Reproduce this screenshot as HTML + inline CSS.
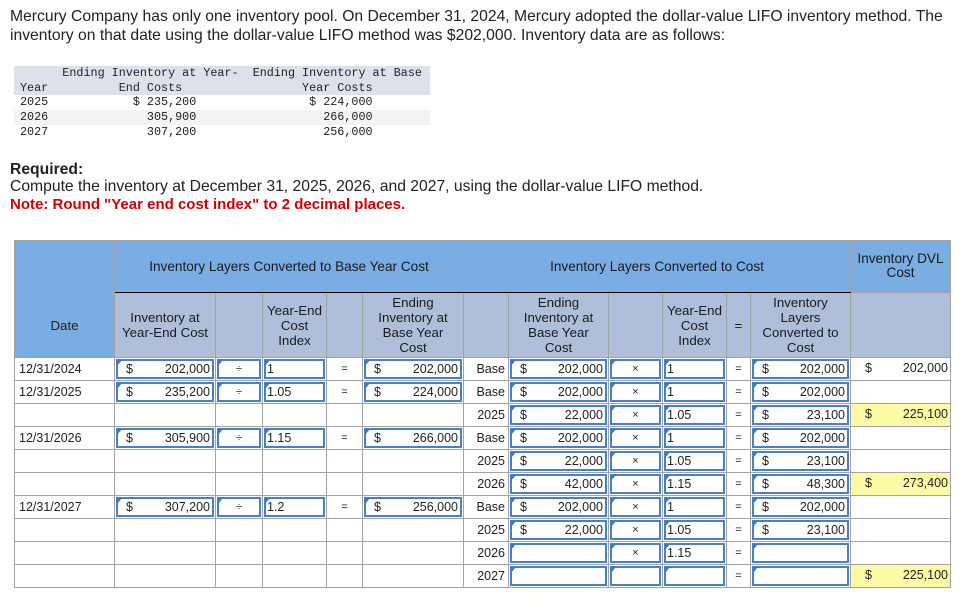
<!DOCTYPE html>
<html><head><meta charset="utf-8"><style>
body{margin:0;width:964px;height:600px;background:#fff;font-family:"Liberation Sans",Arial,sans-serif;color:#222;position:relative;overflow:hidden}
.p{position:absolute;left:10px;font-size:15.7px;line-height:19px}
.mono{position:absolute;left:20px;top:66px;width:410px;font-family:"Liberation Mono",monospace;font-size:11.75px;line-height:14.7px;color:#222}
.mono div{white-space:pre;height:14.7px}
table{position:absolute;left:14px;top:240px;border-collapse:collapse;table-layout:fixed;font-size:12.5px}
td{border:1px solid #a3a3a3;padding:0;height:22px;position:relative;white-space:nowrap}
.h1{background:#79ade3;height:51px;text-align:center;font-size:13.6px;border-bottom:1px solid #000;color:#1a1a1a}
.h2{background:#b0bfd9;height:64px;text-align:center;line-height:15px;font-size:13.3px;color:#1a1a1a}
.dh{background:#79ade3;text-align:center;font-size:13.3px;vertical-align:top}
.in{position:absolute;left:1px;right:1px;top:1px;bottom:1px;border:2px solid #4a7fc1;background:#fff;box-sizing:border-box;line-height:17px}
.in:before{content:"";position:absolute;left:-1px;top:-1px;border-top:6px solid #3a78c8;border-right:5px solid transparent}
.d{position:absolute;left:8px}
.v{position:absolute;right:2px}
.t{position:absolute;left:1px}
.y{background:#fdfaa6}
.ctr{text-align:center;font-size:11px}
.lab{text-align:right;padding-right:3px}
.pl{padding-left:4px}
</style></head><body>
<div class="p" style="top:7px">Mercury Company has only one inventory pool. On December 31, 2024, Mercury adopted the dollar-value LIFO inventory method. The<br>inventory on that date using the dollar-value LIFO method was $202,000. Inventory data are as follows:</div>
<div style="position:absolute;left:14px;top:66px;width:416px;height:29px;background:#dde1ea"></div>
<div style="position:absolute;left:14px;top:110px;width:416px;height:14.7px;background:#f3f3f3"></div>
<div class="mono">
<div>      Ending Inventory at Year-  Ending Inventory at Base</div>
<div>Year          End Costs                 Year Costs</div>
<div>2025            $ 235,200                $ 224,000</div>
<div>2026              305,900                  266,000</div>
<div>2027              307,200                  256,000</div>
</div>
<div class="p" style="top:160px;font-weight:bold">Required:</div>
<div class="p" style="top:177px">Compute the inventory at December 31, 2025, 2026, and 2027, using the dollar-value LIFO method.</div>
<div class="p" style="top:195px;color:#c00;font-weight:bold;font-size:15px">Note: Round "Year end cost index" to 2 decimal places.</div>

<table>
<colgroup><col style="width:100px"><col style="width:101px"><col style="width:47px"><col style="width:64px"><col style="width:36px"><col style="width:101px"><col style="width:45px"><col style="width:100px"><col style="width:54px"><col style="width:64px"><col style="width:24px"><col style="width:100px"><col style="width:100px"></colgroup>
<tr><td class="dh" rowspan="2"><div style="position:absolute;left:0;right:0;top:77px">Date</div></td><td class="h1" colspan="5">Inventory Layers Converted to Base Year Cost</td><td class="h1" colspan="6">Inventory Layers Converted to Cost</td><td class="h1" style="vertical-align:top;border-bottom:1px solid #a3a3a3"><div style="margin-top:11px;line-height:14px">Inventory DVL<br>Cost</div></td></tr>
<tr><td class="h2">Inventory at<br>Year-End Cost</td><td class="h2"></td><td class="h2">Year-End<br>Cost<br>Index</td><td class="h2"></td><td class="h2">Ending<br>Inventory at<br>Base Year<br>Cost</td><td class="h2"></td><td class="h2">Ending<br>Inventory at<br>Base Year<br>Cost</td><td class="h2"></td><td class="h2">Year-End<br>Cost<br>Index</td><td class="h2">=</td><td class="h2">Inventory<br>Layers<br>Converted to<br>Cost</td><td class="h2"></td></tr>

<tr><td class="pl">12/31/2024</td><td><div class="in"><span class="d">$</span><span class="v">202,000</span></div></td><td class="ctr"><div class="in">÷</div></td><td><div class="in"><span class="t">1</span></div></td><td class="ctr">=</td><td><div class="in"><span class="d">$</span><span class="v">202,000</span></div></td><td class="lab">Base</td><td><div class="in"><span class="d">$</span><span class="v">202,000</span></div></td><td class="ctr"><div class="in">×</div></td><td><div class="in"><span class="t">1</span></div></td><td class="ctr">=</td><td><div class="in"><span class="d">$</span><span class="v">202,000</span></div></td><td><span class="d" style="left:14px;top:3px">$</span><span class="v" style="top:3px">202,000</span></td></tr>

<tr><td class="pl">12/31/2025</td><td><div class="in"><span class="d">$</span><span class="v">235,200</span></div></td><td class="ctr"><div class="in">÷</div></td><td><div class="in"><span class="t">1.05</span></div></td><td class="ctr">=</td><td><div class="in"><span class="d">$</span><span class="v">224,000</span></div></td><td class="lab">Base</td><td><div class="in"><span class="d">$</span><span class="v">202,000</span></div></td><td class="ctr"><div class="in">×</div></td><td><div class="in"><span class="t">1</span></div></td><td class="ctr">=</td><td><div class="in"><span class="d">$</span><span class="v">202,000</span></div></td><td></td></tr>

<tr><td></td><td></td><td></td><td></td><td></td><td></td><td class="lab">2025</td><td><div class="in"><span class="d">$</span><span class="v">22,000</span></div></td><td class="ctr"><div class="in">×</div></td><td><div class="in"><span class="t">1.05</span></div></td><td class="ctr">=</td><td><div class="in"><span class="d">$</span><span class="v">23,100</span></div></td><td class="y"><span class="d" style="left:14px;top:3px">$</span><span class="v" style="top:3px">225,100</span></td></tr>

<tr><td class="pl">12/31/2026</td><td><div class="in"><span class="d">$</span><span class="v">305,900</span></div></td><td class="ctr"><div class="in">÷</div></td><td><div class="in"><span class="t">1.15</span></div></td><td class="ctr">=</td><td><div class="in"><span class="d">$</span><span class="v">266,000</span></div></td><td class="lab">Base</td><td><div class="in"><span class="d">$</span><span class="v">202,000</span></div></td><td class="ctr"><div class="in">×</div></td><td><div class="in"><span class="t">1</span></div></td><td class="ctr">=</td><td><div class="in"><span class="d">$</span><span class="v">202,000</span></div></td><td></td></tr>

<tr><td></td><td></td><td></td><td></td><td></td><td></td><td class="lab">2025</td><td><div class="in"><span class="d">$</span><span class="v">22,000</span></div></td><td class="ctr"><div class="in">×</div></td><td><div class="in"><span class="t">1.05</span></div></td><td class="ctr">=</td><td><div class="in"><span class="d">$</span><span class="v">23,100</span></div></td><td></td></tr>

<tr><td></td><td></td><td></td><td></td><td></td><td></td><td class="lab">2026</td><td><div class="in"><span class="d">$</span><span class="v">42,000</span></div></td><td class="ctr"><div class="in">×</div></td><td><div class="in"><span class="t">1.15</span></div></td><td class="ctr">=</td><td><div class="in"><span class="d">$</span><span class="v">48,300</span></div></td><td class="y"><span class="d" style="left:14px;top:3px">$</span><span class="v" style="top:3px">273,400</span></td></tr>

<tr><td class="pl">12/31/2027</td><td><div class="in"><span class="d">$</span><span class="v">307,200</span></div></td><td class="ctr"><div class="in">÷</div></td><td><div class="in"><span class="t">1.2</span></div></td><td class="ctr">=</td><td><div class="in"><span class="d">$</span><span class="v">256,000</span></div></td><td class="lab">Base</td><td><div class="in"><span class="d">$</span><span class="v">202,000</span></div></td><td class="ctr"><div class="in">×</div></td><td><div class="in"><span class="t">1</span></div></td><td class="ctr">=</td><td><div class="in"><span class="d">$</span><span class="v">202,000</span></div></td><td></td></tr>

<tr><td></td><td></td><td></td><td></td><td></td><td></td><td class="lab">2025</td><td><div class="in"><span class="d">$</span><span class="v">22,000</span></div></td><td class="ctr"><div class="in">×</div></td><td><div class="in"><span class="t">1.05</span></div></td><td class="ctr">=</td><td><div class="in"><span class="d">$</span><span class="v">23,100</span></div></td><td></td></tr>

<tr><td></td><td></td><td></td><td></td><td></td><td></td><td class="lab">2026</td><td><div class="in"></div></td><td class="ctr"><div class="in">×</div></td><td><div class="in"><span class="t">1.15</span></div></td><td class="ctr">=</td><td><div class="in"></div></td><td></td></tr>

<tr><td></td><td></td><td></td><td></td><td></td><td></td><td class="lab">2027</td><td><div class="in"></div></td><td class="ctr"><div class="in"></div></td><td><div class="in"></div></td><td class="ctr">=</td><td><div class="in"></div></td><td class="y"><span class="d" style="left:14px;top:3px">$</span><span class="v" style="top:3px">225,100</span></td></tr>
</table>
</body></html>
